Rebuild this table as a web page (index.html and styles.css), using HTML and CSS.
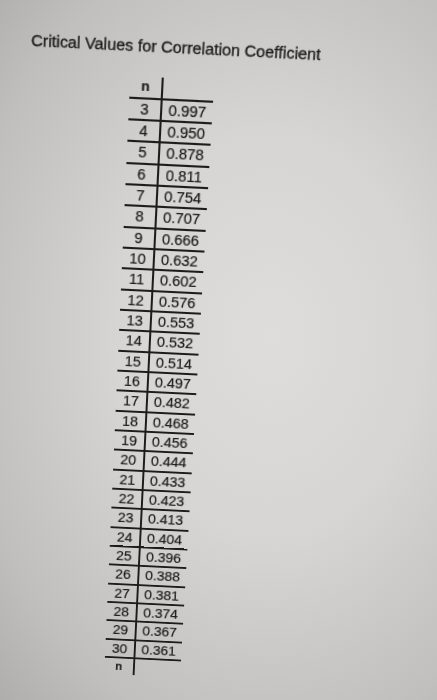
FILE: index.html
```html
<!DOCTYPE html>
<html>
<head>
<meta charset="utf-8">
<link rel="stylesheet" href="styles.css">
</head>
<body>
<div class="sheet">
  <h1 class="title">Critical Values for Correlation Coefficient</h1>
  <table class="cv">
    <thead>
      <tr><th class="n">n</th><th class="v"></th></tr>
    </thead>
    <tbody>
      <tr><td class="n">3</td><td class="v">0.997</td></tr>
      <tr><td class="n">4</td><td class="v">0.950</td></tr>
      <tr><td class="n">5</td><td class="v">0.878</td></tr>
      <tr><td class="n">6</td><td class="v">0.811</td></tr>
      <tr><td class="n">7</td><td class="v">0.754</td></tr>
      <tr><td class="n">8</td><td class="v">0.707</td></tr>
      <tr><td class="n">9</td><td class="v">0.666</td></tr>
      <tr><td class="n">10</td><td class="v">0.632</td></tr>
      <tr><td class="n">11</td><td class="v">0.602</td></tr>
      <tr><td class="n">12</td><td class="v">0.576</td></tr>
      <tr><td class="n">13</td><td class="v">0.553</td></tr>
      <tr><td class="n">14</td><td class="v">0.532</td></tr>
      <tr><td class="n">15</td><td class="v">0.514</td></tr>
      <tr><td class="n">16</td><td class="v">0.497</td></tr>
      <tr><td class="n">17</td><td class="v">0.482</td></tr>
      <tr><td class="n">18</td><td class="v">0.468</td></tr>
      <tr><td class="n">19</td><td class="v">0.456</td></tr>
      <tr><td class="n">20</td><td class="v">0.444</td></tr>
      <tr><td class="n">21</td><td class="v">0.433</td></tr>
      <tr><td class="n">22</td><td class="v">0.423</td></tr>
      <tr><td class="n">23</td><td class="v">0.413</td></tr>
      <tr><td class="n">24</td><td class="v">0.404</td></tr>
      <tr><td class="n">25</td><td class="v">0.396</td></tr>
      <tr><td class="n">26</td><td class="v">0.388</td></tr>
      <tr><td class="n">27</td><td class="v">0.381</td></tr>
      <tr><td class="n">28</td><td class="v">0.374</td></tr>
      <tr><td class="n">29</td><td class="v">0.367</td></tr>
      <tr><td class="n">30</td><td class="v">0.361</td></tr>
    </tbody>
    <tfoot>
      <tr><th class="n foot">n</th><th class="v"></th></tr>
    </tfoot>
  </table>
</div>
</body>
</html>
```

FILE: styles.css
```css
html, body {
  margin: 0;
  padding: 0;
}
body {
  width: 437px;
  height: 700px;
  box-sizing: border-box;
  padding: 45px 0 0 20px;
  overflow: hidden;
  background: radial-gradient(ellipse farthest-corner at 62% 48%, #dedddc 0%, #d6d5d3 40%, #c0bfbd 80%, #afaeac 100%);
  font-family: "Liberation Sans", Arial, sans-serif;
  color: #1e1e1e;
}
.sheet {
  width: 285px;
  padding-top: 5px;
  transform: rotate(2.8deg) perspective(1000px) rotateX(-9.8deg);
  transform-origin: 128px 335px;
}
.title {
  margin: 0 0 0 2px;
  font-size: 15.3px;
  line-height: 20px;
  font-weight: normal;
  color: #1a1a1a;
  white-space: nowrap;
  -webkit-text-stroke: 0.3px #1a1a1a;
}
.cv {
  margin: 17.5px 0 0 97px;
  border-collapse: collapse;
  font-size: 14.4px;
  color: #1c1c1c;
  -webkit-text-stroke: 0.2px #1c1c1c;
}
.cv th, .cv td {
  padding: 0;
  text-align: center;
  line-height: 18.35px;
}
.cv thead tr, .cv tbody tr {
  border-bottom: 2px solid #1c1c1c;
}
.cv thead th {
  height: 19px;
  vertical-align: bottom;
  font-weight: bold;
  font-size: 13px;
}
.cv .n {
  width: 30px;
  border-right: 2px solid #1c1c1c;
}
.cv .v {
  width: 48px;
}
.cv tfoot th {
  height: 18px;
  vertical-align: top;
  font-size: 12px;
  font-weight: bold;
}
```
